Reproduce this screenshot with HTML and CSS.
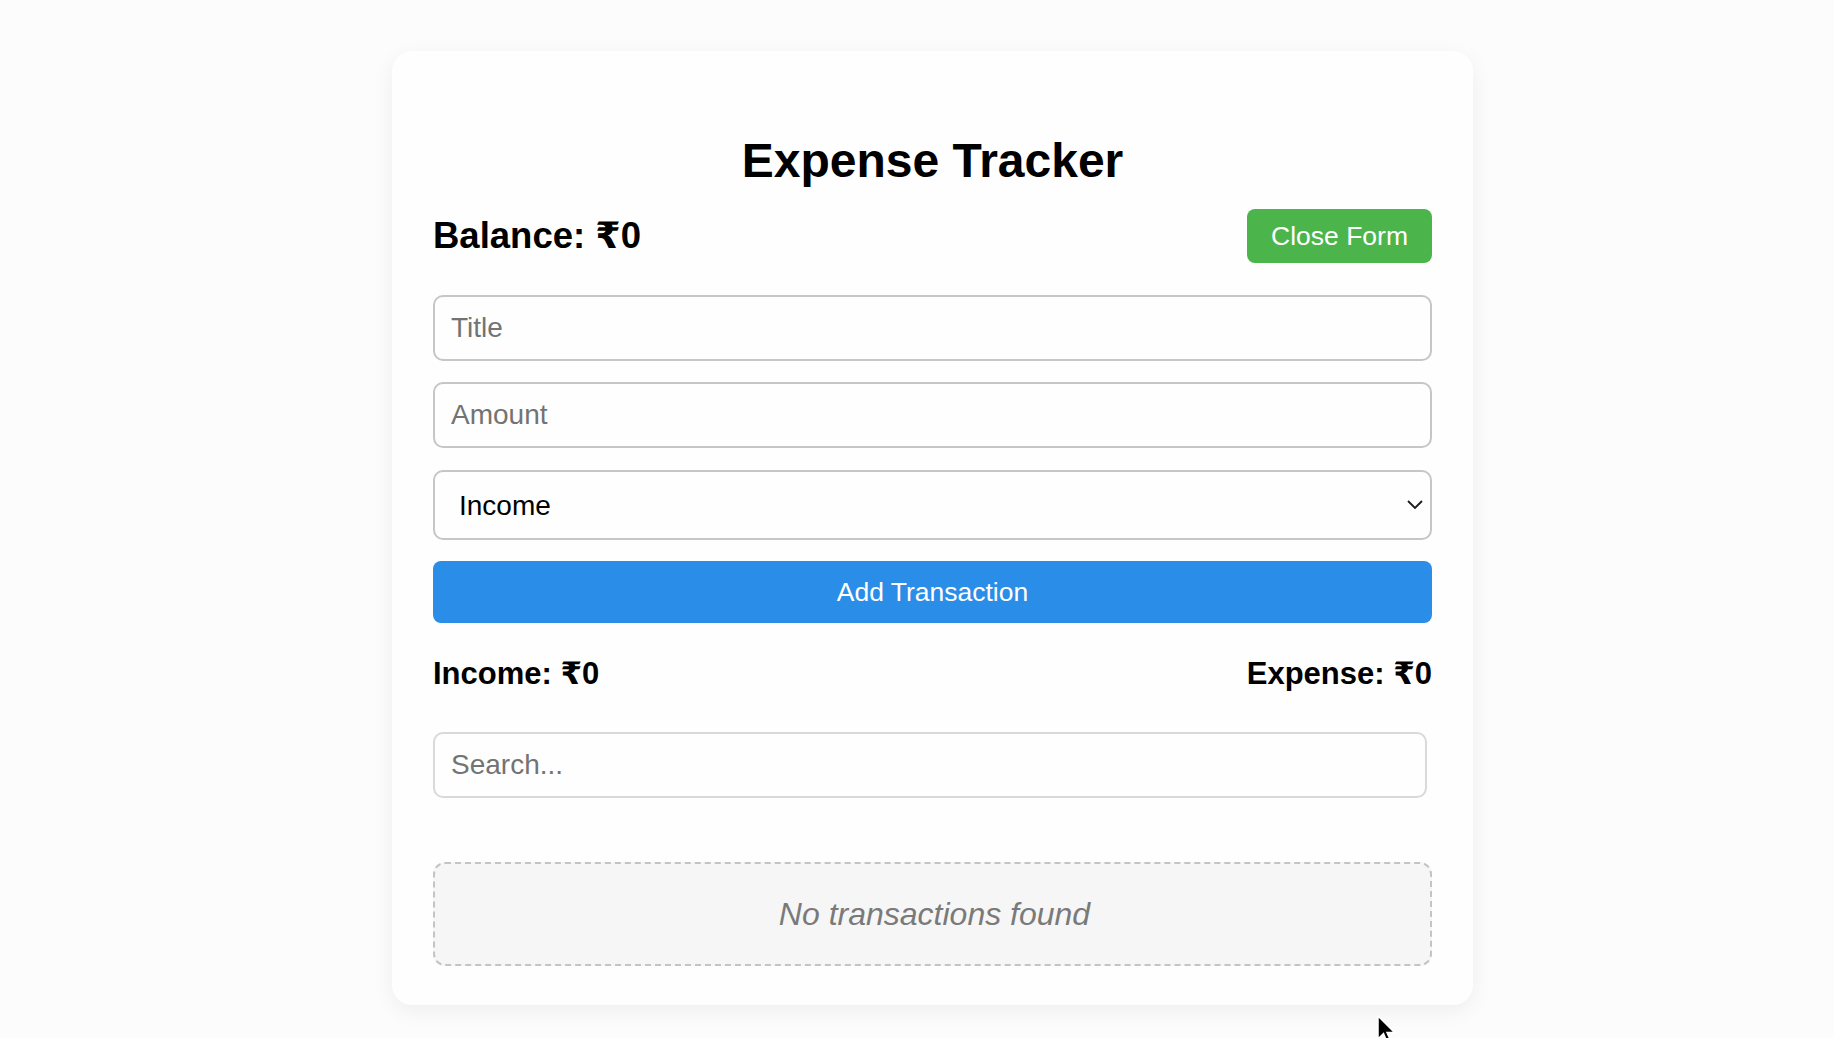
FILE: index.html
```html
<!DOCTYPE html>
<html lang="en">
<head>
<meta charset="utf-8">
<title>Expense Tracker</title>
<link rel="stylesheet" href="styles.css">
</head>
<body>
  <main class="card">
    <h1 class="title">Expense Tracker</h1>
    <div class="balance-row">
      <h2 class="balance">Balance: ₹0</h2>
      <button class="btn btn-close">Close Form</button>
    </div>
    <form class="form">
      <input class="field" type="text" placeholder="Title">
      <input class="field field-amount" type="number" placeholder="Amount">
      <div class="select-wrap">
        <select class="field select">
          <option>Income</option>
          <option>Expense</option>
        </select>
        <svg class="chevron" width="16" height="9" viewBox="0 0 16 9"><path d="M1 1 L8 8 L15 1" fill="none" stroke="#1c1c1c" stroke-width="1.8"/></svg>
      </div>
      <button class="btn btn-add" type="button">Add Transaction</button>
    </form>
    <div class="summary">
      <h3 class="sum">Income: ₹0</h3>
      <h3 class="sum">Expense: ₹0</h3>
    </div>
    <input class="field search" type="text" placeholder="Search...">
    <div class="empty">No transactions found</div>
  </main>
  <svg class="cursor" width="22" height="30" viewBox="0 0 22 30"><path d="M1 1 L1 24 L6.5 18.5 L10.5 28 L14 26.5 L10 17.5 L17.5 17.5 Z" fill="#000" stroke="#fff" stroke-width="1.5"/></svg>
</body>
</html>
```
FILE: styles.css
```css
html, body {
  margin: 0;
  height: 100%;
}
body {
  background: #fcfcfc;
  font-family: "Liberation Sans", Arial, "DejaVu Sans", sans-serif;
  color: #000;
  box-sizing: border-box;
  padding: 51px 0 0 31px;
  display: flex;
  justify-content: center;
  align-items: flex-start;
  overflow: hidden;
  position: relative;
}
.card {
  width: 1081px;
  box-sizing: border-box;
  padding: 41px 41px 39px;
  background: #fefefe;
  border-radius: 20px;
  box-shadow: 0 6px 22px rgba(0, 0, 0, 0.06);
}
.title {
  margin: 41px 0 20px;
  font-size: 48px;
  line-height: 56px;
  font-weight: bold;
  text-align: center;
}
.balance-row {
  display: flex;
  justify-content: space-between;
  align-items: center;
  height: 54px;
  margin-bottom: 32px;
}
.balance {
  margin: 0;
  font-size: 36.5px;
  line-height: 1.15;
  font-weight: bold;
}
.btn {
  border: none;
  color: #fff;
  font-family: "Liberation Sans", Arial, sans-serif;
  font-size: 26.5px;
  border-radius: 8px;
  cursor: pointer;
}
.btn-close {
  height: 54px;
  padding: 0 24px;
  background: #4bb54b;
}
.form {
  display: flex;
  flex-direction: column;
}
.field {
  display: block;
  box-sizing: border-box;
  width: 100%;
  height: 66px;
  margin: 0;
  border: 2px solid #c6c6c6;
  border-radius: 10px;
  padding: 0 16px;
  background: #fefefe;
  font-family: "Liberation Sans", Arial, sans-serif;
  font-size: 28px;
  color: #000;
  outline: none;
}
.field::placeholder {
  color: #737373;
}
.field-amount {
  margin-top: 21px;
  -moz-appearance: textfield;
}
.field-amount::-webkit-inner-spin-button,
.field-amount::-webkit-outer-spin-button {
  -webkit-appearance: none;
  margin: 0;
}
.select-wrap {
  position: relative;
  margin-top: 22px;
}
.select {
  height: 70px;
  -webkit-appearance: none;
  appearance: none;
  padding-left: 24px;
}
.chevron {
  position: absolute;
  right: 9px;
  top: 30px;
}
.btn-add {
  margin-top: 21px;
  height: 62px;
  width: 100%;
  background: #2a8de8;
}
.summary {
  margin-top: 32px;
  height: 37px;
  display: flex;
  justify-content: space-between;
  align-items: center;
}
.sum {
  margin: 0;
  font-size: 31px;
  line-height: 37px;
  font-weight: bold;
}
.search {
  margin-top: 40px;
  width: calc(100% - 5px);
  border-color: #d9d9d9;
}
.empty {
  margin-top: 64px;
  height: 104px;
  box-sizing: border-box;
  border: 2px dashed #c4c4c4;
  border-radius: 12px;
  background: #f6f6f6;
  display: flex;
  align-items: center;
  justify-content: center;
  padding-left: 4px;
  font-size: 32px;
  font-style: italic;
  color: #7a7a7a;
}
.cursor {
  position: absolute;
  left: 1377px;
  top: 1015px;
}
```
